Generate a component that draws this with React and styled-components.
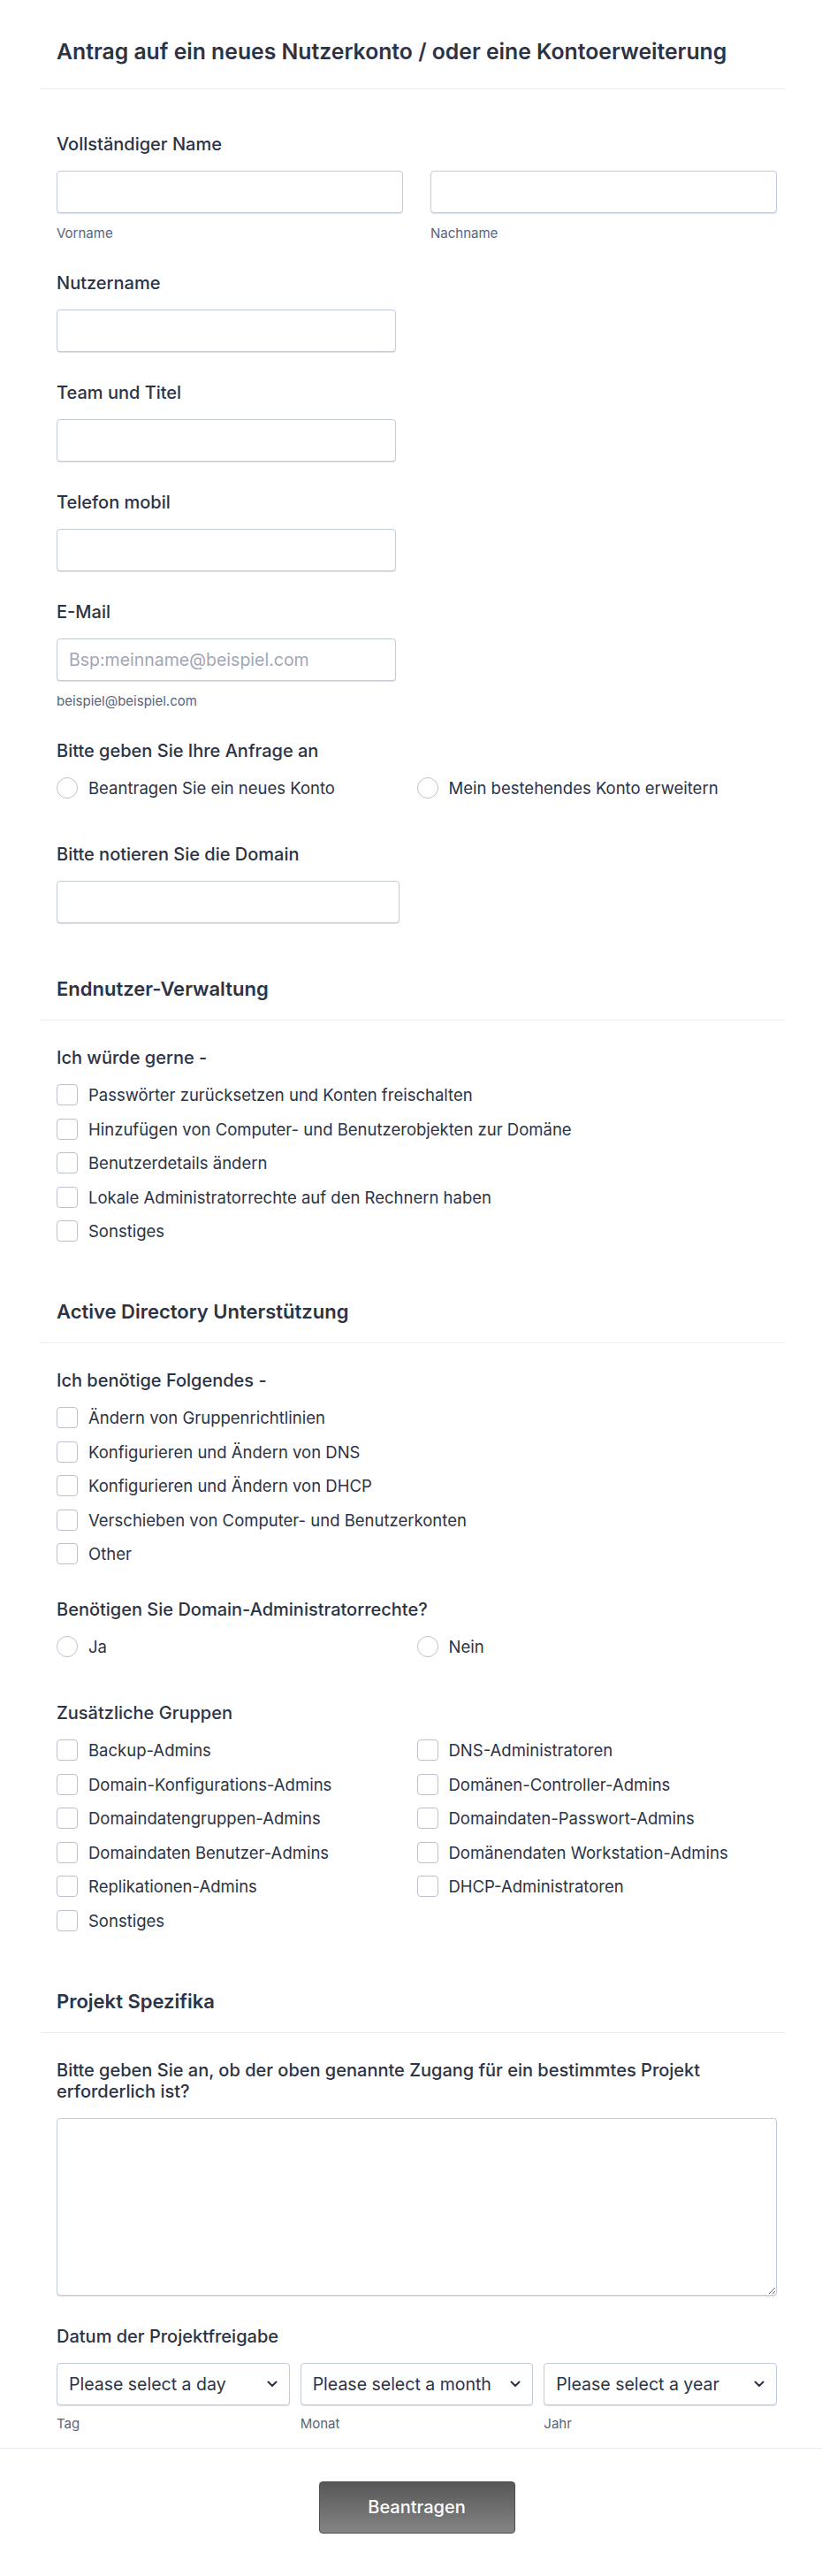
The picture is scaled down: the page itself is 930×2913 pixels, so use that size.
import styled, { createGlobalStyle } from 'styled-components';

const GlobalStyle = createGlobalStyle`
  html, body {
    margin: 0;
    padding: 0;
    background: #ffffff;
  }
  body {
    font-family: Inter, "Noto Sans", "Liberation Sans", sans-serif;
    color: #2c3345;
  }
  * {
    box-sizing: border-box;
  }
`;

const anfrageOptions = ['Beantragen Sie ein neues Konto', 'Mein bestehendes Konto erweitern'];

const endnutzerOptions = [
  'Passwörter zurücksetzen und Konten freischalten',
  'Hinzufügen von Computer- und Benutzerobjekten zur Domäne',
  'Benutzerdetails ändern',
  'Lokale Administratorrechte auf den Rechnern haben',
  'Sonstiges',
];

const adOptions = [
  'Ändern von Gruppenrichtlinien',
  'Konfigurieren und Ändern von DNS',
  'Konfigurieren und Ändern von DHCP',
  'Verschieben von Computer- und Benutzerkonten',
  'Other',
];

// zwei Spalten, zeilenweise gelesen
const gruppenOptions = [
  'Backup-Admins',
  'DNS-Administratoren',
  'Domain-Konfigurations-Admins',
  'Domänen-Controller-Admins',
  'Domaindatengruppen-Admins',
  'Domaindaten-Passwort-Admins',
  'Domaindaten Benutzer-Admins',
  'Domänendaten Workstation-Admins',
  'Replikationen-Admins',
  'DHCP-Administratoren',
  'Sonstiges',
];

function ChevronDown() {
  return (
    <svg width="12" height="8" viewBox="0 0 12 8" fill="none">
      <path d="M1.5 1.5L6 6L10.5 1.5" stroke="#2c3345" strokeWidth="2" strokeLinecap="round" strokeLinejoin="round" />
    </svg>
  );
}

function Options({ items, cols = 1, round = false }) {
  return (
    <OptionGrid $cols={cols} $round={round}>
      {items.map((item, i) => (
        <Option key={i}>
          <Box $round={round} />
          <span>{item}</span>
        </Option>
      ))}
    </OptionGrid>
  );
}

function DateSelect({ text, sub }) {
  return (
    <div>
      <SelectWrap>
        <Select defaultValue="">
          <option value="">{text}</option>
        </Select>
        <Chevron>
          <ChevronDown />
        </Chevron>
      </SelectWrap>
      <SubLabel $gap={11}>{sub}</SubLabel>
    </div>
  );
}

export default function App() {
  return (
    <>
      <GlobalStyle />
      <FormBody>
        <FormHeader>
          <Title>Antrag auf ein neues Nutzerkonto / oder eine Kontoerweiterung</Title>
        </FormHeader>

        <FieldList $top={33}>
          <Field>
            <Label>Vollständiger Name</Label>
            <TwoCols>
              <div>
                <TextInput />
                <SubLabel>Vorname</SubLabel>
              </div>
              <div>
                <TextInput />
                <SubLabel>Nachname</SubLabel>
              </div>
            </TwoCols>
          </Field>

          <Field>
            <Label>Nutzername</Label>
            <TextInput $w="384px" />
          </Field>

          <Field>
            <Label>Team und Titel</Label>
            <TextInput $w="384px" />
          </Field>

          <Field>
            <Label>Telefon mobil</Label>
            <TextInput $w="384px" />
          </Field>

          <Field>
            <Label>E-Mail</Label>
            <TextInput $w="384px" placeholder="Bsp:meinname@beispiel.com" />
            <SubLabel>beispiel@beispiel.com</SubLabel>
          </Field>

          <Field>
            <Label>Bitte geben Sie Ihre Anfrage an</Label>
            <Options items={anfrageOptions} cols={2} round />
          </Field>

          <Field>
            <Label>Bitte notieren Sie die Domain</Label>
            <TextInput $w="388px" />
          </Field>
        </FieldList>

        <SectionHeader>
          <SectionTitle>Endnutzer-Verwaltung</SectionTitle>
        </SectionHeader>

        <FieldList $top={13}>
          <Field>
            <Label>Ich würde gerne -</Label>
            <Options items={endnutzerOptions} />
          </Field>
        </FieldList>

        <SectionHeader>
          <SectionTitle>Active Directory Unterstützung</SectionTitle>
        </SectionHeader>

        <FieldList $top={13}>
          <Field>
            <Label>Ich benötige Folgendes -</Label>
            <Options items={adOptions} />
          </Field>

          <Field>
            <Label>Benötigen Sie Domain-Administratorrechte?</Label>
            <Options items={['Ja', 'Nein']} cols={2} round />
          </Field>

          <Field>
            <Label>Zusätzliche Gruppen</Label>
            <Options items={gruppenOptions} cols={2} />
          </Field>
        </FieldList>

        <SectionHeader>
          <SectionTitle>Projekt Spezifika</SectionTitle>
        </SectionHeader>

        <FieldList $top={13}>
          <Field>
            <Label>Bitte geben Sie an, ob der oben genannte Zugang für ein bestimmtes Projekt erforderlich ist?</Label>
            <TextArea />
          </Field>

          <Field>
            <Label>Datum der Projektfreigabe</Label>
            <ThreeCols>
              <DateSelect text="Please select a day" sub="Tag" />
              <DateSelect text="Please select a month" sub="Monat" />
              <DateSelect text="Please select a year" sub="Jahr" />
            </ThreeCols>
          </Field>
        </FieldList>
      </FormBody>

      <Footer>
        <SubmitButton type="button">Beantragen</SubmitButton>
      </Footer>
    </>
  );
}

const FormBody = styled.div`
  width: 843px;
  margin-left: 45px;
`;

const FormHeader = styled.div`
  padding: 42px 9px 26px 19px;
  border-bottom: 1px solid #ebebf0;
`;

const Title = styled.h1`
  margin: 0;
  font-size: 24.75px;
  line-height: 32px;
  font-weight: 600;
  color: #2c3345;
`;

const SectionHeader = styled.div`
  padding: 43px 9px 21px 19px;
  border-bottom: 1px solid #ebebf0;
`;

const SectionTitle = styled.h2`
  margin: 0;
  font-size: 22px;
  line-height: 28px;
  font-weight: 600;
  color: #2c3345;
`;

const FieldList = styled.div`
  padding-top: ${({ $top }) => $top}px;
`;

const Field = styled.div`
  padding: 17px 9px 17px 19px;
`;

const Label = styled.div`
  font-size: 20px;
  line-height: 24px;
  font-weight: 500;
  color: #2c3345;
  margin-bottom: 18px;
`;

const SubLabel = styled.div`
  margin-top: ${({ $gap }) => $gap || 13}px;
  font-size: 15px;
  line-height: 20px;
  color: #57647e;
`;

const TextInput = styled.input`
  display: block;
  width: ${({ $w }) => $w || '100%'};
  height: 48px;
  padding: 0 13px;
  border: 1px solid #c3cad8;
  border-radius: 4px;
  background: #ffffff;
  box-shadow: 0 1px 0 #dfe2e8;
  font-family: Inter, "Noto Sans", sans-serif;
  font-size: 19.5px;
  color: #2c3345;
  outline: none;

  &::placeholder {
    color: #a0a7b6;
  }
`;

const TwoCols = styled.div`
  display: grid;
  grid-template-columns: 1fr 1fr;
  column-gap: 31px;
`;

const ThreeCols = styled.div`
  display: grid;
  grid-template-columns: repeat(3, 1fr);
  column-gap: 12px;
`;

const OptionGrid = styled.div`
  display: grid;
  grid-template-columns: repeat(${({ $cols }) => $cols}, 1fr);
  row-gap: 14.5px;
  margin-bottom: ${({ $round }) => ($round ? 17 : 5)}px;
`;

const Option = styled.label`
  display: flex;
  align-items: center;
  gap: 12px;
  font-size: 18.5px;
  line-height: 24px;
  color: #2c3345;
`;

const Box = styled.span`
  flex: none;
  width: 24px;
  height: 24px;
  border: 1px solid #bcc1cc;
  border-radius: ${({ $round }) => ($round ? '50%' : '4px')};
  background: #ffffff;
`;

const TextArea = styled.textarea`
  display: block;
  width: 100%;
  height: 201px;
  border: 1px solid #c3cad8;
  border-radius: 4px;
  box-shadow: 0 1px 0 #dfe2e8;
  resize: both;
  outline: none;
  font-family: Inter, "Noto Sans", sans-serif;
`;

const SelectWrap = styled.div`
  position: relative;
`;

const Select = styled.select`
  display: block;
  width: 100%;
  height: 48px;
  padding: 0 36px 0 13px;
  border: 1px solid #c3cad8;
  border-radius: 4px;
  background: #ffffff;
  box-shadow: 0 1px 0 #dfe2e8;
  appearance: none;
  font-family: Inter, "Noto Sans", sans-serif;
  font-size: 19.5px;
  color: #2c3345;
  outline: none;
`;

const Chevron = styled.span`
  position: absolute;
  right: 14px;
  top: 50%;
  transform: translateY(-50%);
  display: flex;
  pointer-events: none;
`;

const Footer = styled.div`
  display: flex;
  justify-content: center;
  padding: 37px 51px 50px 64px;
  border-top: 1px solid #e6e9f0;
`;

const SubmitButton = styled.button`
  width: 222px;
  height: 59px;
  border: 1px solid #4f4f4f;
  border-radius: 4px;
  background: linear-gradient(to bottom, #575757, #848484);
  color: #ffffff;
  font-family: Inter, "Noto Sans", sans-serif;
  font-size: 20px;
  font-weight: 500;
  cursor: pointer;
`;
